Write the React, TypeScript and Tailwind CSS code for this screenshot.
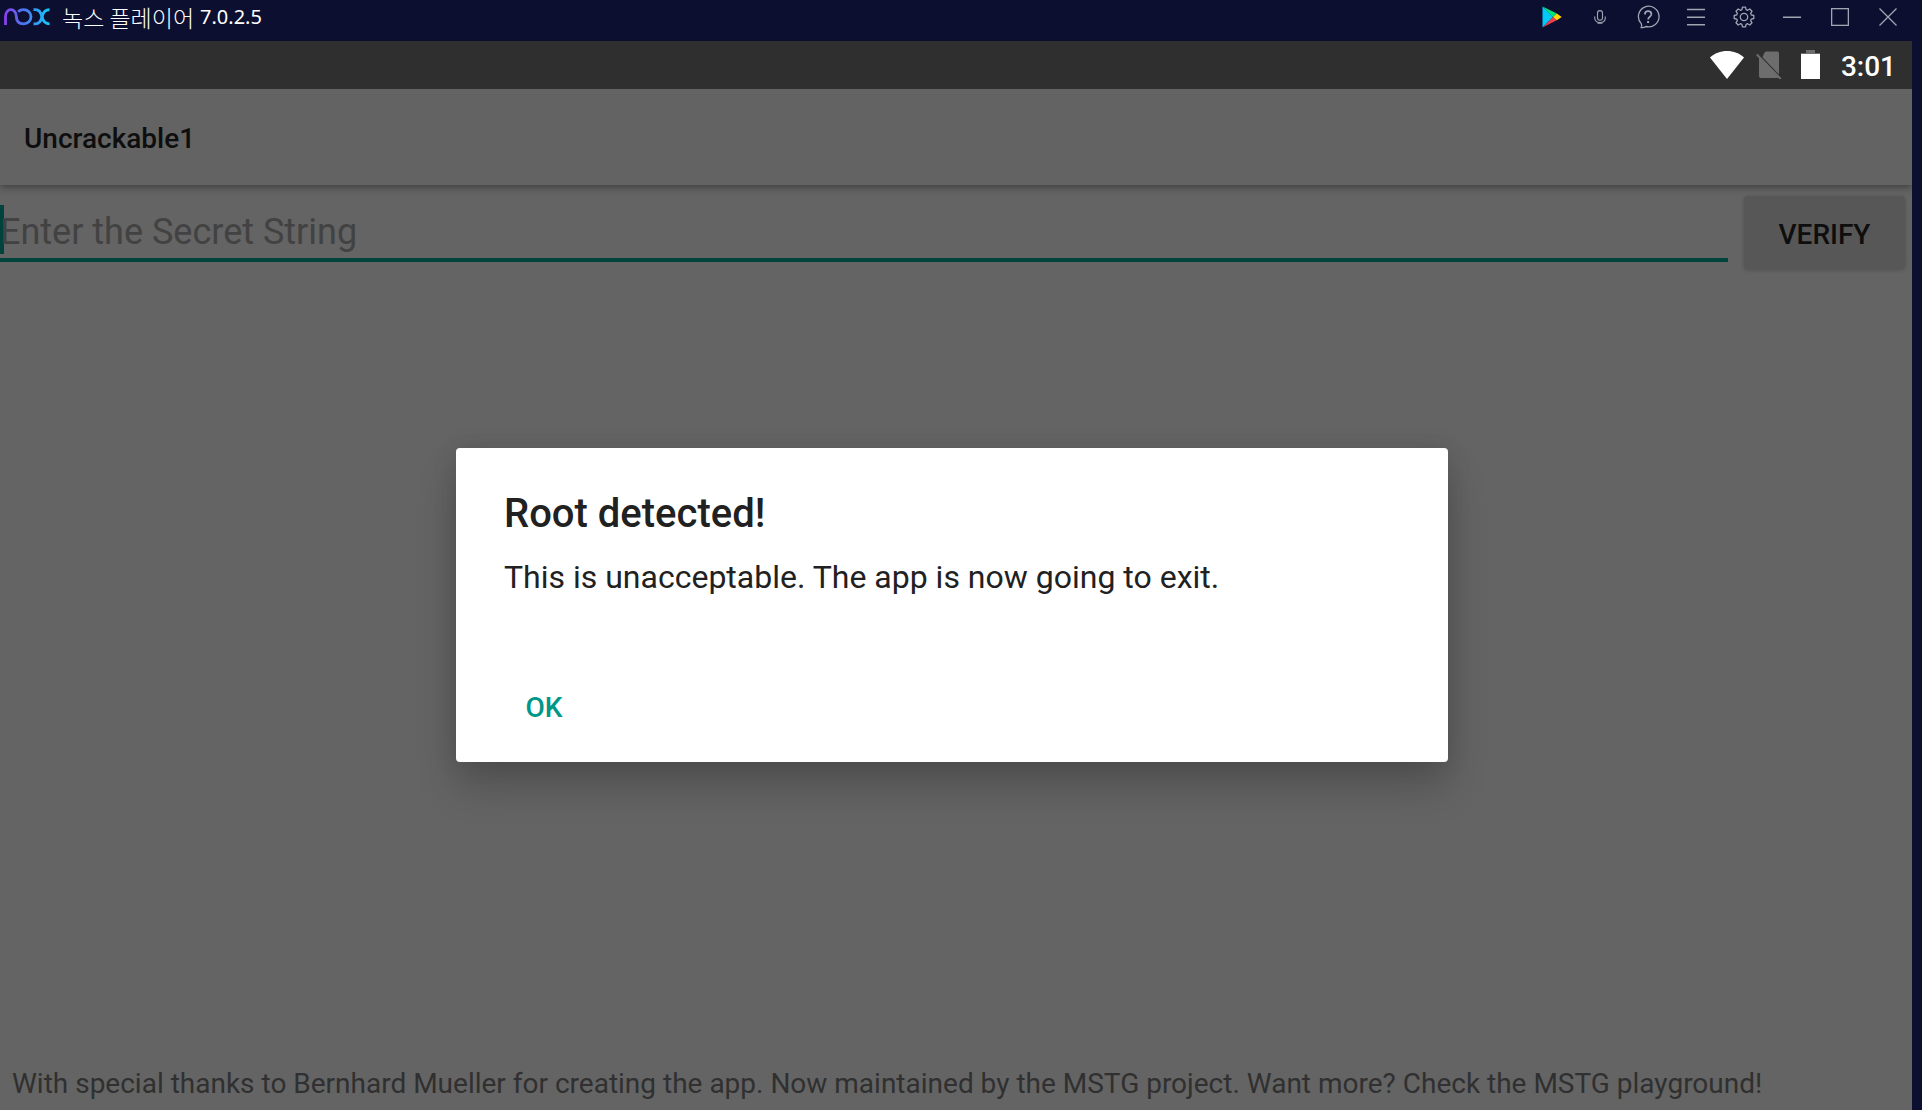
import type { ReactNode } from "react";

function NoxLogo() {
  return (
    <svg viewBox="0 0 46 18" className="h-[18px] w-[46px]" fill="none" aria-label="nox">
      <defs>
        <linearGradient id="nox" gradientUnits="userSpaceOnUse" x1="0" y1="0" x2="46" y2="0">
          <stop offset="0" stopColor="#8b3df0" />
          <stop offset="0.45" stopColor="#4a78f2" />
          <stop offset="1" stopColor="#10cbfb" />
        </linearGradient>
      </defs>
      <g stroke="url(#nox)" strokeWidth="2.8">
        <path d="M1.5 17V8.2a5.4 6.5 0 0 1 10.8 0C12.3 13 15 15.8 19.6 15.8c4.2 0 7.400-2.900 7.400-7s-3.200-7.100-7.400-7.100c-2 0-4 .5-5.500 2" />
        <path d="M29.500 1.700h2c3.500 0 5.500 3 6.500 7.100 1 4 3 7 7.500 7" />
        <path d="M45.500 1.700c-4.500 0-6.500 3-7.500 7.100-1 4-3 7-6.500 7h-2" />
      </g>
    </svg>
  );
}

function PlayStoreIcon() {
  return (
    <svg viewBox="0 0 20 22" className="h-[22px] w-5">
      <path d="M.5.500 11 11 .500 21.500z" fill="#00c8fa" />
      <path d="M.5.500 14.800 7.500 11 11z" fill="#00e67a" />
      <path d="M.5 21.500 14.800 14.200 11 11z" fill="#ef3c4c" />
      <path d="M14.800 7.500 19.700 10.900 14.800 14.200 11 11z" fill="#ffd60a" />
    </svg>
  );
}

function MicIcon() {
  return (
    <svg viewBox="0 0 12 14" className="h-3.5 w-3" fill="none" stroke="currentColor" strokeWidth="1.1">
      <rect x="3.500" y=".6" width="5" height="9.600" rx="2.500" />
      <path d="M.7 6.500v1.200c0 3 2.200 4.800 5.300 4.800s5.300-1.800 5.300-4.800V6.500M3.500 13.200h5" />
    </svg>
  );
}

function HelpIcon() {
  return (
    <svg viewBox="0 0 24 24" className="h-6 w-6" fill="none" stroke="currentColor">
      <path
        d="M5.200 18.600A10.300 10.300 0 1 1 10 21.500c-1.200.8-3 1.300-4.800 1.100.6-1.300.6-2.600 0-4z"
        strokeWidth="1.300"
      />
      <path d="M8.900 9.400c0-2 1.300-3.200 3.200-3.200s3.300 1.200 3.300 3c0 2.500-3.300 2.600-3.300 5.200" strokeWidth="1.700" />
      <path d="M12.100 16v2" strokeWidth="2" />
    </svg>
  );
}

function MenuIcon() {
  return (
    <svg viewBox="0 0 18 18" className="h-[18px] w-[18px]" fill="none" stroke="currentColor" strokeWidth="1.500">
      <path d="M0 1.500h18M0 9.250h18M0 16.750h18" />
    </svg>
  );
}

function GearIcon() {
  return (
    <svg viewBox="0 0 22 22" className="h-[22px] w-[22px]" fill="none" stroke="currentColor" strokeWidth="1.300">
      <circle cx="11" cy="11" r="3.700" />
      <path
        strokeLinejoin="round"
        d="M9.500 1.200h3l.6 2.500 1.500.6 2.200-1.300 2.200 2.200-1.300 2.200.6 1.500 2.500.6v3l-2.500.6-.6 1.500 1.300 2.200-2.200 2.200-2.200-1.300-1.500.6-.6 2.500h-3l-.6-2.500-1.500-.6L5.200 19 3 16.800l1.300-2.200-.6-1.500-2.500-.6v-3l2.500-.6.600-1.500L3 5.200 5.200 3l2.200 1.300 1.500-.6z"
      />
    </svg>
  );
}

function MinimizeIcon() {
  return (
    <svg viewBox="0 0 18 18" className="h-[18px] w-[18px]" fill="none" stroke="currentColor" strokeWidth="1.500">
      <path d="M0 9.250h18" />
    </svg>
  );
}

function MaximizeIcon() {
  return (
    <svg viewBox="0 0 18 18" className="h-[18px] w-[18px]" fill="none" stroke="currentColor" strokeWidth="1.300">
      <rect x=".65" y=".65" width="16.700" height="16.700" />
    </svg>
  );
}

function CloseIcon() {
  return (
    <svg viewBox="0 0 18 18" className="h-[18px] w-[18px]" fill="none" stroke="currentColor" strokeWidth="1.300">
      <path d="M.5.500l17 17M17.500.5l-17 17" />
    </svg>
  );
}

function WifiIcon() {
  return (
    <svg viewBox="0 0 34 28" className="h-7 w-[34px]" fill="#fff">
      <path d="M17 28 0 6.500C4.500 2.300 10.500 0 17 0s12.500 2.300 17 6.500z" />
    </svg>
  );
}

function NoSimIcon() {
  return (
    <svg viewBox="0 0 26 28" className="h-7 w-[26px]" fill="#6d6d6d">
      <path d="M10 .5h11.500A1.500 1.500 0 0 1 23 2v21.500L6.500 6.200 8.500 1.500z" />
      <path d="M3 6 23 26.400a1.500 1.500 0 0 1-1 .6H5a2 2 0 0 1-2-2z" />
      <path d="M.8 3.500 24.800 28" stroke="#6d6d6d" strokeWidth="2" />
    </svg>
  );
}

function BatteryIcon() {
  return (
    <svg viewBox="0 0 19 29" className="h-[29px] w-[19px]">
      <path d="M5 0h9v3h5v2H0V3h5z" fill="#6d6d6d" />
      <path d="M0 4h19v25H0z" fill="#fff" />
    </svg>
  );
}

const WINDOW_BUTTONS: { label: string; icon: ReactNode }[] = [
  { label: "Google Play", icon: <PlayStoreIcon /> },
  { label: "Microphone", icon: <MicIcon /> },
  { label: "Help", icon: <HelpIcon /> },
  { label: "Menu", icon: <MenuIcon /> },
  { label: "Settings", icon: <GearIcon /> },
  { label: "Minimize", icon: <MinimizeIcon /> },
  { label: "Maximize", icon: <MaximizeIcon /> },
  { label: "Close", icon: <CloseIcon /> },
];

function TitleBar() {
  return (
    <header className="flex h-[41px] items-start justify-between bg-[#0c0f2f] pr-2.5 pl-1">
      <div className="flex h-[34px] items-center gap-3 text-white">
        <NoxLogo />
        <h1 className="flex items-center gap-1.5">
          <span className="font-['Noto_Sans_CJK_KR',sans-serif] text-[23px] leading-8 font-light">녹스 플레이어</span>
          <span className="font-['Noto_Sans',sans-serif] text-xl leading-8">7.0.2.5</span>
        </h1>
      </div>
      <div className="flex text-[#a3a4b2]">
        {WINDOW_BUTTONS.map(({ label, icon }) => (
          <button key={label} aria-label={label} className="flex h-[34px] w-12 items-center justify-center">
            {icon}
          </button>
        ))}
      </div>
    </header>
  );
}

function StatusBar() {
  return (
    <div className="flex h-12 items-center justify-end bg-[#2f2f2f] pr-4">
      <WifiIcon />
      <span className="ml-3">
        <NoSimIcon />
      </span>
      <span className="ml-[19px] pb-0.5">
        <BatteryIcon />
      </span>
      <span className="ml-[21px] pt-1 text-[28px] leading-8 font-medium text-white">3:01</span>
    </div>
  );
}

function RootDialog() {
  return (
    <div className="absolute inset-0 flex items-center justify-center pt-[11px] pr-2">
      <div
        role="alertdialog"
        aria-labelledby="dialog-title"
        aria-describedby="dialog-message"
        className="w-[992px] rounded bg-white pb-[18px] text-[#212121] shadow-[0_24px_40px_rgba(0,0,0,0.2),0_0_24px_rgba(0,0,0,0.1)]"
      >
        <div className="px-12 pt-[42px]">
          <h2 id="dialog-title" className="text-[40px] leading-[48px] font-medium">
            Root detected!
          </h2>
          <p id="dialog-message" className="mt-[19px] text-[32px] leading-10">
            This is unacceptable. The app is now going to exit.
          </p>
        </div>
        <div className="mt-[75px] px-6">
          <button className="h-[72px] w-32 text-[28px] font-medium text-[#009688]">OK</button>
        </div>
      </div>
    </div>
  );
}

export default function App() {
  return (
    <div className="flex min-h-screen flex-col bg-[#0c0f2f] font-[Roboto,sans-serif]">
      <TitleBar />
      <div className="mr-2.5 flex grow flex-col">
        <StatusBar />
        <div className="relative flex grow flex-col overflow-hidden bg-[#646464]">
          <div className="flex h-24 items-center bg-[#636363] px-6 pt-1 shadow-[0_2px_8px_rgba(0,0,0,0.4)]">
            <h2 className="text-[28px] leading-8 font-medium text-[#0e0e0e]">Uncrackable1</h2>
          </div>
          <form className="flex items-start gap-4 pt-[11px] pr-[7px]" onSubmit={(e) => e.preventDefault()}>
            <div className="flex grow items-center border-b-4 border-[#00433c] pt-[9px] pb-1">
              {/* text caret */}
              <span className="-mr-1 h-[49px] w-1 bg-[#00433c]" />
              <input
                type="text"
                aria-label="Enter the Secret String"
                placeholder="Enter the Secret String"
                className="h-[49px] grow bg-transparent pt-1 text-4xl text-[#0e0e0e] outline-none placeholder:text-[#424242]"
              />
            </div>
            <button className="h-[73px] w-[161px] rounded bg-[#575757] pt-1 text-[28px] font-medium text-[#0e0e0e] shadow-[0_1px_4px_rgba(0,0,0,0.2)]">
              VERIFY
            </button>
          </form>
          <p className="mt-auto px-3 pb-2.5 text-[28px] leading-8 text-[#303030]">
            With special thanks to Bernhard Mueller for creating the app. Now maintained by the MSTG project. Want
            more? Check the MSTG playground!
          </p>
          <RootDialog />
        </div>
      </div>
    </div>
  );
}
